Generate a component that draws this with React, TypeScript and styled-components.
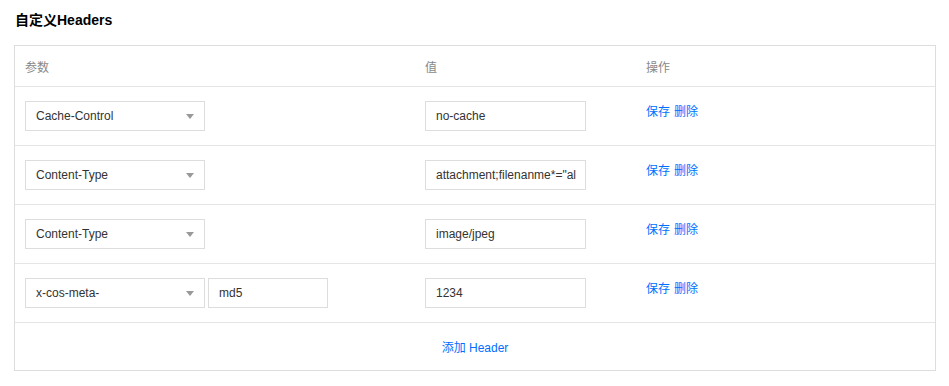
import React from 'react';
import styled, { createGlobalStyle } from 'styled-components';

const GlobalStyle = createGlobalStyle`
  body {
    margin: 0;
    background: #fff;
    font-family: "Liberation Sans", Arial, "Noto Sans CJK SC", sans-serif;
    font-size: 12px;
    color: #333;
  }
`;

const Page = styled.div`
  padding: 11px 13px 0 14px;
`;

const Title = styled.h3`
  margin: 0 0 16px 1px;
  font-size: 14px;
  line-height: 18px;
  font-weight: bold;
  color: #000;
`;

const Table = styled.div`
  border: 1px solid #ddd;
  box-shadow: 0 1px 0 #e2e2e2;
`;

const Row = styled.div<{ head?: boolean }>`
  display: grid;
  grid-template-columns: 400px 221px 1fr;
  height: ${(p) => (p.head ? '40px' : '58px')};
  border-bottom: 1px solid #e5e5e5;
  align-items: ${(p) => (p.head ? 'center' : 'start')};
`;

const HeadCell = styled.div`
  padding: 0 10px;
  color: #888;
  font-family: "Noto Sans CJK SC", sans-serif;
  font-size: 12px;
`;

const Cell = styled.div`
  padding: 14px 10px 0;
  display: flex;
  gap: 3px;
`;

const Field = styled.div<{ w: number }>`
  box-sizing: border-box;
  width: ${(p) => p.w}px;
  height: 30px;
  border: 1px solid #ddd;
  padding: 0 10px;
  display: flex;
  align-items: center;
  justify-content: space-between;
  color: #333;
  white-space: nowrap;
  overflow: hidden;
`;

const Arrow = styled.span`
  width: 0;
  height: 0;
  border-left: 4px solid transparent;
  border-right: 4px solid transparent;
  border-top: 5px solid #999;
  margin-right: 0;
`;

const Actions = styled.div`
  padding: 15px 10px 0;
  line-height: 18px;
  font-family: "Noto Sans CJK SC", sans-serif;
`;

const Link = styled.a`
  color: #006eff;
  text-decoration: none;
  cursor: pointer;
  & + & {
    margin-left: 4px;
  }
`;

const AddRow = styled.div`
  height: 47px;
  display: flex;
  align-items: center;
  justify-content: center;
  font-family: "Liberation Sans", "Noto Sans CJK SC", sans-serif;
`;

const rows = [
  { key: 'Cache-Control', value: 'no-cache' },
  { key: 'Content-Type', value: 'attachment;filenanme*="al' },
  { key: 'Content-Type', value: 'image/jpeg' },
  { key: 'x-cos-meta-', suffix: 'md5', value: '1234' },
];

export default function App() {
  return (
    <Page>
      <GlobalStyle />
      <Title>自定义Headers</Title>
      <Table>
        <Row head>
          <HeadCell>参数</HeadCell>
          <HeadCell>值</HeadCell>
          <HeadCell>操作</HeadCell>
        </Row>
        {rows.map((r, i) => (
          <Row key={i}>
            <Cell>
              <Field w={180}>
                {r.key}
                <Arrow />
              </Field>
              {r.suffix && <Field w={120}>{r.suffix}</Field>}
            </Cell>
            <Cell>
              <Field w={161}>{r.value}</Field>
            </Cell>
            <Actions>
              <Link>保存</Link>
              <Link>删除</Link>
            </Actions>
          </Row>
        ))}
        <AddRow>
          <Link>添加 Header</Link>
        </AddRow>
      </Table>
    </Page>
  );
}
